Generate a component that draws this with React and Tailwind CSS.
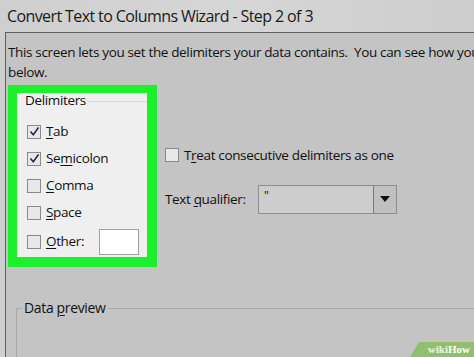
import React from "react";

const Check = ({ checked }) => (
	<span className="w-[14px] h-[14px] border border-[#8a8a8a] bg-[#e8e8e8] flex items-center justify-center shrink-0">
		{checked && (
			<svg width="11" height="11" viewBox="0 0 11 11">
				<path d="M1.5 5.5 L4.3 8.8 L9.5 1.5" fill="none" stroke="#1f2a44" strokeWidth="1.6" />
			</svg>
		)}
	</span>
);

const Row = ({ checked, pre, u, post }) => (
	<div className="flex items-center h-[27px] gap-[5px]">
		<Check checked={checked} />
		<span>
			{pre}
			<span className="underline underline-offset-2">{u}</span>
			{post}
		</span>
	</div>
);

export default function App() {
	return (
		<div
			className="w-[474px] h-[357px] overflow-hidden bg-gradient-to-r from-[#cfcfcf] via-[#d6d6d6] to-[#cdcdcd] text-[#111] flex flex-col tracking-[-0.35px]"
			style={{ fontFamily: '"Open Sans", "Noto Sans", sans-serif' }}
		>
			<div className="h-[32px] shrink-0 pl-[7px] pt-[3px] text-[16px] leading-[26px] text-[#1a1a1a] tracking-[-0.6px]">
				Convert Text to Columns Wizard - Step 2 of 3
			</div>
			<div className="flex-1 ml-[5px] border-l border-t border-[#5e5e5e] bg-[#c4c4c4] flex flex-col">
				<div className="pl-[2px] pt-[9px] text-[13.5px] leading-[20px] whitespace-nowrap">
					<div>This screen lets you set the delimiters your data contains.&nbsp; You can see how your</div>
					<div>below.</div>
				</div>
				<div className="flex mt-[3px]">
					<div className="ml-[2px] w-[149px] h-[182px] bg-[#1cf02a] p-[8px_10px_10px_9px] shrink-0">
						<div className="w-full h-full bg-[#efefef] pl-[10px] text-[13.5px]">
							<div className="flex items-center h-[14px] -ml-[4px]">
								<span className="px-[2px] leading-[14px]">Delimiters</span>
								<span className="flex-1 border-t border-[#d8d8d8] mt-[2px]" />
							</div>
							<div className="mt-[11px]">
								<Row checked pre="" u="T" post="ab" />
								<Row checked pre="Se" u="m" post="icolon" />
								<Row pre="" u="C" post="omma" />
								<Row pre="" u="S" post="pace" />
								<div className="flex items-center h-[27px] gap-[5px] mt-[2px]">
									<Check />
									<span>
										<span className="underline underline-offset-2">O</span>ther:
									</span>
									<span className="ml-[10px] w-[40px] h-[26px] bg-white border border-[#a0a0a0]" />
								</div>
							</div>
						</div>
					</div>
					<div className="pl-[8px] pt-[62px] text-[13.5px]">
						<div className="flex items-center gap-[5px] h-[16px]">
							<Check />
							<span>
								T<span className="underline underline-offset-2">r</span>eat consecutive delimiters as one
							</span>
						</div>
						<div className="flex items-center mt-[21px] h-[30px]">
							<span className="w-[93px]">
								Text <span className="underline underline-offset-2">q</span>ualifier:
							</span>
							<div className="w-[139px] h-[29px] border border-[#8e8e8e] bg-[#cdcdcd] flex">
								<span className="flex-1 pl-[5px] leading-[20px] text-[12px]">"</span>
								<span className="w-[23px] border-l border-[#7a7a7a] bg-[#c0c0c0] flex items-center justify-center">
									<svg width="10" height="6" viewBox="0 0 10 6">
										<path d="M0 0 H10 L5 6 Z" fill="#111" />
									</svg>
								</span>
							</div>
						</div>
					</div>
				</div>
				<div className="flex-1 relative mt-[41px] ml-[10px] border-l border-t border-[#a9a9a9]">
					<span className="absolute -top-[11px] left-[5px] px-[2px] bg-[#c4c4c4] text-[14px] leading-[20px]">
						Data <span className="underline underline-offset-2">p</span>review
					</span>
					<div
						className="absolute right-0 bottom-0 w-[64px] h-[15px] bg-[#8fbf6f] flex items-center justify-end pr-[4px] text-[11px] font-bold text-[#eef6e6] tracking-normal"
						style={{ clipPath: "polygon(14% 0, 100% 0, 100% 100%, 0 100%)", fontFamily: '"Liberation Serif", serif' }}
					>
						wiki<span className="text-white">How</span>
					</div>
				</div>
			</div>
		</div>
	);
}
